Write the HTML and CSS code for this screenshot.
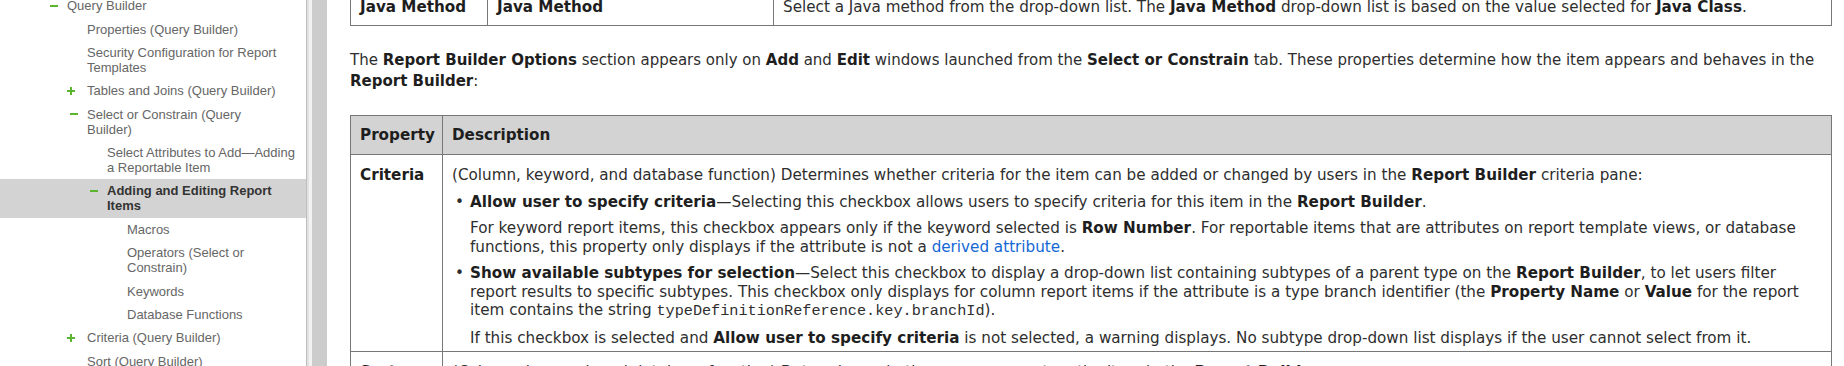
FILE: index.html
```html
<!DOCTYPE html>
<html lang="en">
<head>
<meta charset="utf-8">
<title>Adding and Editing Report Items</title>
<link rel="stylesheet" href="styles.css">
</head>
<body>
<div class="page">
  <nav class="sidebar">
    <ul class="tree">
      <li class="item l1"><span class="tog"><span class="minus"></span></span><span class="label">Query Builder</span></li>
      <li class="item l2"><span class="tog"></span><span class="label">Properties (Query Builder)</span></li>
      <li class="item l2"><span class="tog"></span><span class="label">Security Configuration for Report Templates</span></li>
      <li class="item l2"><span class="tog"><span class="plus"></span></span><span class="label">Tables and Joins (Query Builder)</span></li>
      <li class="item l2"><span class="tog"><span class="minus"></span></span><span class="label">Select or Constrain (Query Builder)</span></li>
      <li class="item l3"><span class="tog"></span><span class="label">Select Attributes to Add—Adding a Reportable Item</span></li>
      <li class="item l3 current"><span class="tog"><span class="minus"></span></span><span class="label">Adding and Editing Report Items</span></li>
      <li class="item l4"><span class="tog"></span><span class="label">Macros</span></li>
      <li class="item l4"><span class="tog"></span><span class="label">Operators (Select or Constrain)</span></li>
      <li class="item l4"><span class="tog"></span><span class="label">Keywords</span></li>
      <li class="item l4"><span class="tog"></span><span class="label">Database Functions</span></li>
      <li class="item l2"><span class="tog"><span class="plus"></span></span><span class="label">Criteria (Query Builder)</span></li>
      <li class="item l2"><span class="tog"></span><span class="label">Sort (Query Builder)</span></li>
    </ul>
  </nav>
  <div class="splitter"><div class="s-line"></div><div class="s-light"></div><div class="s-white"></div><div class="s-bar"></div></div>
  <main class="content">
    <table class="props props-top">
      <colgroup><col class="c-a"><col class="c-b"><col></colgroup>
      <tbody>
        <tr>
          <td><b>Java Method</b></td>
          <td><b>Java Method</b></td>
          <td>Select a Java method from the drop-down list. The <b>Java Method</b> drop-down list is based on the value selected for <b>Java Class</b>.</td>
        </tr>
      </tbody>
    </table>

    <p class="intro">The <b>Report Builder Options</b> section appears only on <b>Add</b> and <b>Edit</b> windows launched from the <b>Select or Constrain</b> tab. These properties determine how the item appears and behaves in the <b>Report Builder</b>:</p>

    <table class="props props-main">
      <colgroup><col class="c-prop"><col></colgroup>
      <thead>
        <tr><th>Property</th><th>Description</th></tr>
      </thead>
      <tbody>
        <tr>
          <td><p><b>Criteria</b></p></td>
          <td>
            <p>(Column, keyword, and database function) Determines whether criteria for the item can be added or changed by users in the <b>Report Builder</b> criteria pane:</p>
            <ul class="bullets">
              <li>
                <span class="dot">•</span>
                <div class="li-body">
                  <p><b>Allow user to specify criteria</b>—Selecting this checkbox allows users to specify criteria for this item in the <b>Report Builder</b>.</p>
                  <p>For keyword report items, this checkbox appears only if the keyword selected is <b>Row Number</b>. For reportable items that are attributes on report template views, or database functions, this property only displays if the attribute is not a <a href="#">derived attribute</a>.</p>
                </div>
              </li>
              <li>
                <span class="dot">•</span>
                <div class="li-body">
                  <p><b>Show available subtypes for selection</b>—Select this checkbox to display a drop-down list containing subtypes of a parent type on the <b>Report Builder</b>, to let users filter report results to specific subtypes. This checkbox only displays for column report items if the attribute is a type branch identifier (the <b>Property Name</b> or <b>Value</b> for the report item contains the string <code>typeDefinitionReference.key.branchId</code>).</p>
                  <p>If this checkbox is selected and <b>Allow user to specify criteria</b> is not selected, a warning displays. No subtype drop-down list displays if the user cannot select from it.</p>
                </div>
              </li>
            </ul>
          </td>
        </tr>
        <tr>
          <td><p><b>Sort</b></p></td>
          <td><p>(Column, keyword, and database function) Determines whether users can sort on the item in the <b>Report Builder</b>.</p></td>
        </tr>
      </tbody>
    </table>
  </main>
</div>
</body>
</html>
```

FILE: styles.css
```css
* { box-sizing: border-box; }

html, body {
  margin: 0;
  padding: 0;
  background: #ffffff;
}

.page {
  display: flex;
  height: 366px;
  overflow: hidden;
}

/* ---------- sidebar tree ---------- */
.sidebar {
  width: 306px;
  flex: 0 0 306px;
  overflow: hidden;
  font-family: "Liberation Sans", Arial, sans-serif;
  font-size: 13px;
  line-height: 15px;
  color: #666666;
}

.tree {
  list-style: none;
  margin: -6px 0 0 0;
  padding: 0;
}

.item {
  display: flex;
  align-items: flex-start;
  padding-top: 4.2px;
  padding-bottom: 4.2px;
}

.item.l1 { padding-left: 47px; }
.item.l2 { padding-left: 67px; }
.item.l3 { padding-left: 87px; }
.item.l4 { padding-left: 107px; }

.item .label { max-width: 200px; }
.item.l3 .label { max-width: 196px; }
.item.l4 .label { max-width: 170px; }

.item.current {
  background: #d3d3d3;
  color: #333333;
  font-weight: bold;
}

.tog {
  flex: 0 0 20px;
  width: 20px;
  height: 15px;
  display: flex;
  align-items: center;
}

.minus {
  display: block;
  width: 8px;
  height: 2px;
  margin-left: 3px;
  background: #5cb531;
}

.plus {
  display: block;
  width: 8px;
  height: 8px;
  background:
    linear-gradient(#5cb531, #5cb531) center / 8px 2px no-repeat,
    linear-gradient(#5cb531, #5cb531) center / 2px 8px no-repeat;
}

/* ---------- splitter ---------- */
.splitter {
  flex: 0 0 21px;
  display: flex;
  height: 100%;
}
.s-line { width: 1px; background: #bdbdbd; }
.s-light { width: 2px; background: #e2e2e2; }
.s-white { width: 3px; background: #f2f2f2; }
.s-bar { width: 15px; background: #cccccc; }

/* ---------- content ---------- */
.content {
  flex: 1 1 auto;
  min-width: 0;
  padding: 0 12px 0 23px;
  font-family: "DejaVu Sans", Verdana, sans-serif;
  font-size: 15.2px;
  line-height: 18.5px;
  color: #2e2e2e;
  overflow: hidden;
}

.content b { color: #1e1e1e; }

.props {
  width: 100%;
  border-collapse: collapse;
  table-layout: fixed;
}

.props th,
.props td {
  border: 1px solid #777777;
  text-align: left;
  vertical-align: top;
}

.props-top { margin-top: -11px; }
.props-top td { padding: 8px 9px; }
.props-top .c-a { width: 137px; }
.props-top .c-b { width: 286px; }

.intro {
  margin: 24px 0 23px;
  font-size: 15px;
  line-height: 21px;
}

.props-main .c-prop { width: 92px; }

.props-main th {
  background: #d3d3d3;
  padding: 10px 9px;
  font-weight: bold;
  color: #1e1e1e;
}

.props-main td {
  padding: 3px 9px 4px;
}

.props-main td p {
  margin: 8px 0 0 0;
}

.bullets {
  list-style: none;
  margin: 0;
  padding: 0;
}

.bullets li {
  display: flex;
  align-items: flex-start;
}

.dot {
  flex: 0 0 18px;
  margin-top: 8px;
  padding-left: 3px;
}

.li-body {
  flex: 1 1 auto;
  min-width: 0;
}

.content a {
  color: #1467d6;
  text-decoration: none;
}

.content code {
  font-family: "Liberation Mono", "Courier New", monospace;
  font-size: 15.2px;
}
```
